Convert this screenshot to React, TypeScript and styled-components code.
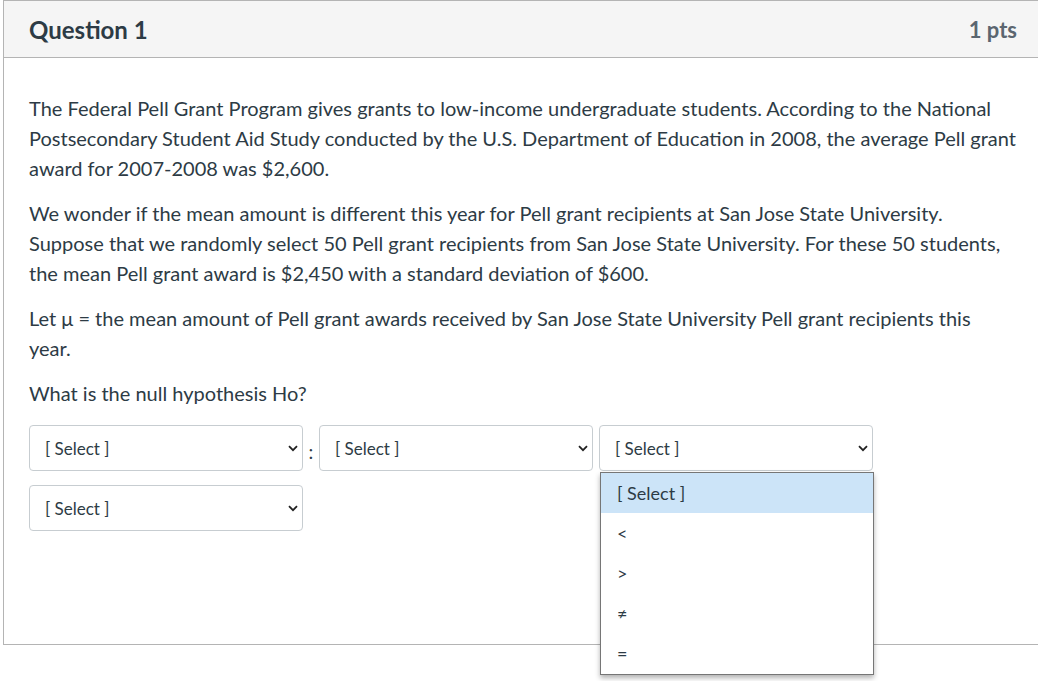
import styled, { createGlobalStyle } from "styled-components";

const GlobalStyle = createGlobalStyle`
  html, body {
    margin: 0;
    padding: 0;
    background: #ffffff;
  }
  body {
    font-family: Lato, "Open Sans", "Liberation Sans", sans-serif;
    color: #2d3b45;
  }
`;

const Page = styled.div`
  padding-left: 3px;
  min-height: 100vh;
  box-sizing: border-box;
`;

const Panel = styled.div`
  width: 1035px;
  box-sizing: border-box;
  border: 1px solid #b4b4b4;
  border-right: none;
  background: #ffffff;
`;

const Header = styled.div`
  height: 56px;
  display: flex;
  align-items: center;
  justify-content: space-between;
  padding: 0 21px 0 25px;
  background: #f5f5f5;
  border-bottom: 1px solid #b4b4b4;
`;

const Title = styled.h2`
  margin: 0;
  font-size: 24px;
  font-weight: 700;
  color: #2d3b45;
`;

const Points = styled.span`
  font-size: 22px;
  font-weight: 700;
  color: #5b6670;
`;

const Body = styled.div`
  padding: 35px 0 113px 25px;
`;

const Text = styled.div`
  width: 988px;
`;

const Para = styled.p`
  margin: 0 0 15px;
  font-size: 20px;
  line-height: 30px;
  color: #2d3b45;
`;

const Answers = styled.div`
  display: flex;
  flex-direction: column;
  gap: 14px;
  margin-top: 17px;
`;

const Row = styled.div`
  display: flex;
  align-items: center;
`;

const Colon = styled.span`
  width: 16px;
  text-align: center;
  font-size: 19px;
  color: #2d3b45;
  padding-top: 6px;
`;

const SelectWrap = styled.div<{ $gap?: number }>`
  position: relative;
  margin-left: ${(p) => p.$gap ?? 0}px;
`;

const SelectBox = styled.div`
  width: 274px;
  height: 46px;
  box-sizing: border-box;
  border: 1px solid #c7cdd1;
  border-radius: 4px;
  display: flex;
  align-items: center;
  justify-content: space-between;
  padding: 0 4px 0 15px;
  font-size: 17px;
  color: #2d3b45;
  background: #ffffff;
`;

const Chevron = () => (
  <svg width="10" height="7" viewBox="0 0 10 7" aria-hidden="true">
    <path d="M1 1.2 L5 5.2 L9 1.2" fill="none" stroke="#222" strokeWidth="1.8" />
  </svg>
);

const Menu = styled.ul`
  position: absolute;
  top: 47px;
  left: 1px;
  width: 274px;
  box-sizing: border-box;
  margin: 0;
  padding: 0 0 1px;
  list-style: none;
  background: #ffffff;
  border: 1px solid #767676;
  box-shadow: 0 3px 5px rgba(0, 0, 0, 0.3);
  z-index: 10;
`;

const Option = styled.li<{ $active?: boolean }>`
  height: 40px;
  display: flex;
  align-items: center;
  padding-left: 16px;
  font-size: 18px;
  color: #2d3b45;
  background: ${(p) => (p.$active ? "#cce4f8" : "transparent")};
`;

function Select({ open, gap }: { open?: boolean; gap?: number }) {
  return (
    <SelectWrap $gap={gap}>
      <SelectBox>
        <span>[ Select ]</span>
        <Chevron />
      </SelectBox>
      {open && (
        <Menu>
          <Option $active>[ Select ]</Option>
          <Option>&lt;</Option>
          <Option>&gt;</Option>
          <Option>≠</Option>
          <Option>=</Option>
        </Menu>
      )}
    </SelectWrap>
  );
}

export default function App() {
  return (
    <>
      <GlobalStyle />
      <Page>
        <Panel>
          <Header>
            <Title>Question 1</Title>
            <Points>1 pts</Points>
          </Header>
          <Body>
            <Text>
              <Para>
                The Federal Pell Grant Program gives grants to low-income undergraduate students. According to the National
                Postsecondary Student Aid Study conducted by the U.S. Department of Education in 2008, the average Pell grant
                award for 2007-2008 was $2,600.
              </Para>
              <Para>
                We wonder if the mean amount is different this year for Pell grant recipients at San Jose State University.
                Suppose that we randomly select 50 Pell grant recipients from San Jose State University. For these 50 students,
                the mean Pell grant award is $2,450 with a standard deviation of $600.
              </Para>
              <Para>
                Let μ = the mean amount of Pell grant awards received by San Jose State University Pell grant recipients this
                <br />
                year.
              </Para>
              <Para>What is the null hypothesis Ho?</Para>
            </Text>
            <Answers>
              <Row>
                <Select />
                <Colon>:</Colon>
                <Select />
                <Select gap={6} open />
              </Row>
              <Row>
                <Select />
              </Row>
            </Answers>
          </Body>
        </Panel>
      </Page>
    </>
  );
}
